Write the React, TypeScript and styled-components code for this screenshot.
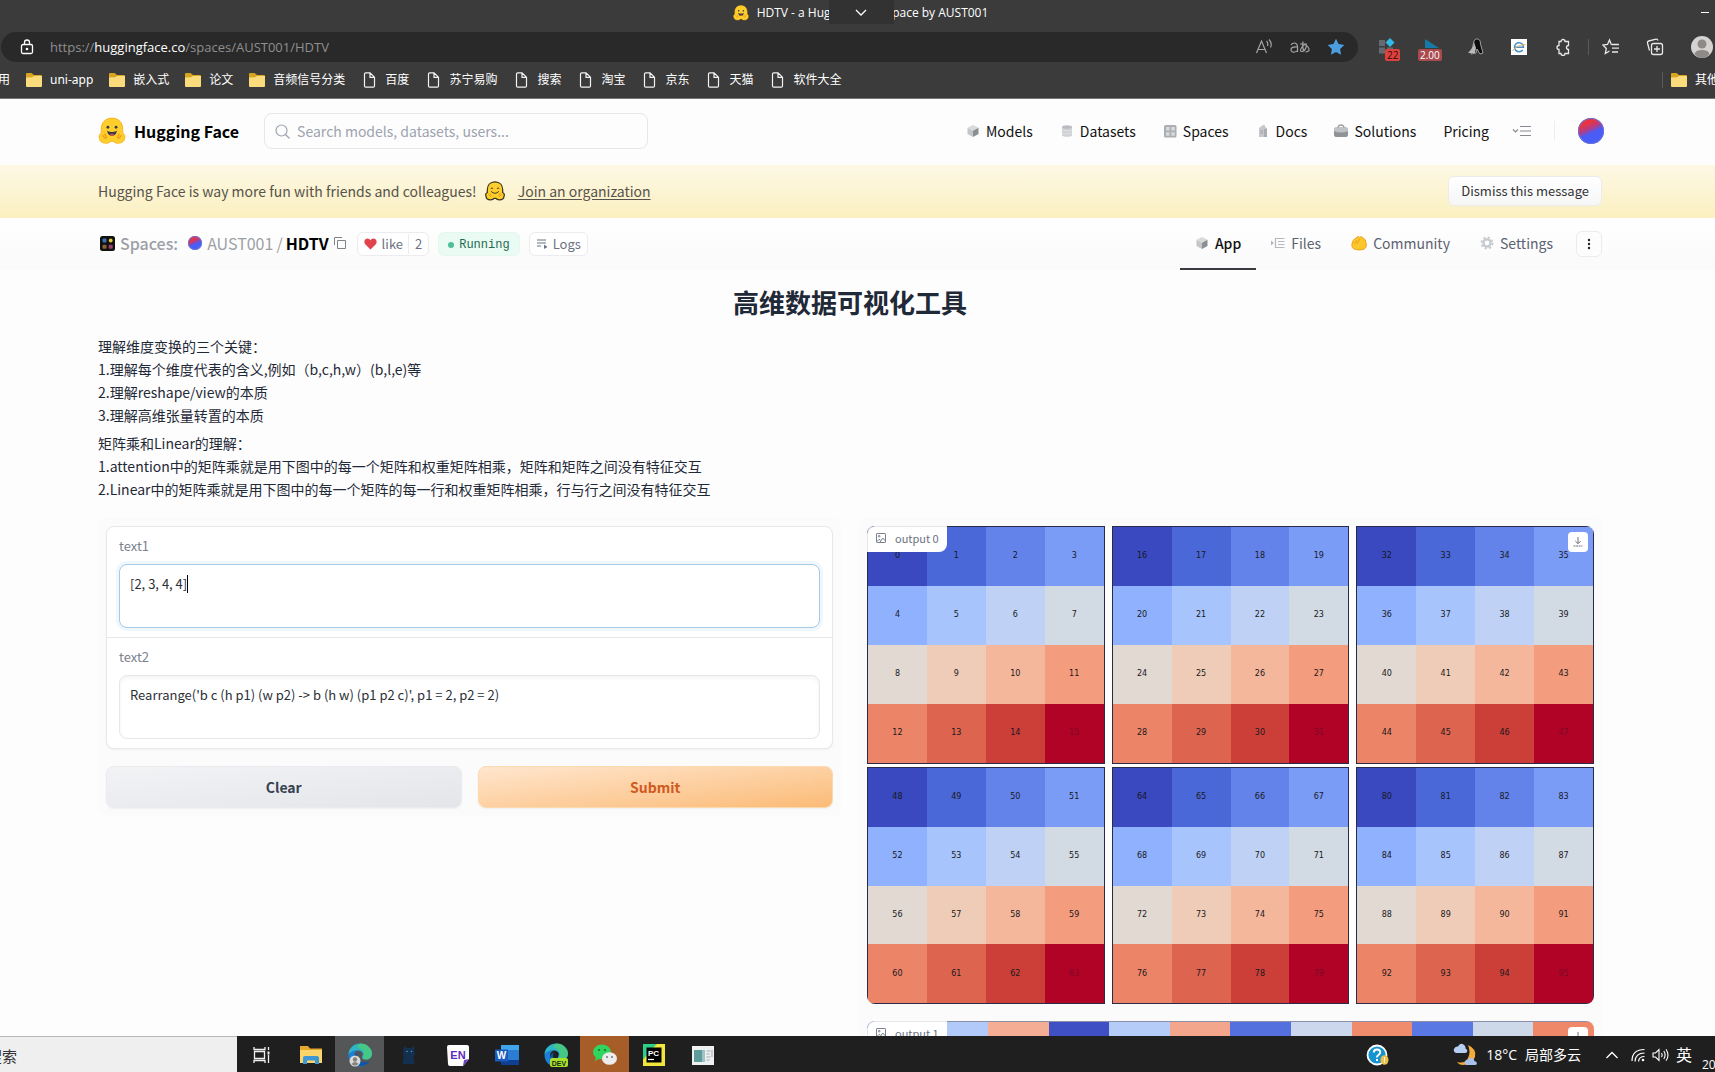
import React from "react";
import styled, { createGlobalStyle, css } from "styled-components";

const sans = `"Noto Sans CJK SC", "Noto Sans", sans-serif`;
const system = `"Open Sans", "Noto Sans CJK SC", sans-serif`;

const GlobalStyle = createGlobalStyle`
  *, *::before, *::after { box-sizing: border-box; }
  body { margin: 0; overflow: hidden; font-family: ${sans}; background: #fdfdfd; }
  button, input, textarea { font-family: inherit; }
  button { cursor: pointer; }
  a { color: inherit; text-decoration: none; }
  svg { display: block; flex: none; }
`;

const Screen = styled.div`
  display: flex;
  flex-direction: column;
  height: 100vh;
  overflow: hidden;
`;

/* ---------- browser ---------- */

const Browser = styled.header`
  flex: none;
  background: #3b3b3b;
  color: #fff;
  font-family: ${system};
  font-size: 12px;
  border-bottom: 1px solid #77757a;
  overflow: hidden;
`;

const TitleBar = styled.div`
  position: relative;
  display: flex;
  align-items: center;
  justify-content: center;
  height: 32px;
  padding: 0 0 6px 6px;
`;

const PageTitle = styled.div`
  display: flex;
  align-items: center;
  gap: 8px;
  line-height: 16px;
  white-space: nowrap;
`;

const DropHandle = styled.button`
  position: absolute;
  top: 0;
  left: calc(50% - 29px);
  width: 65px;
  height: 24px;
  display: grid;
  place-items: center;
  border: 0;
  padding: 0;
  background: #323232;
  color: #fff;
`;

const Minimise = styled.button`
  position: absolute;
  top: 4px;
  right: 0;
  width: 20px;
  height: 16px;
  border: 0;
  padding: 0 6px;
  background: none;
  &::before { content: ""; display: block; height: 1px; background: #fff; }
`;

const AddressRow = styled.div`
  display: flex;
  align-items: center;
  height: 30px;
  padding-left: 1px;
`;

const AddressBar = styled.div`
  flex: 1;
  display: flex;
  align-items: center;
  height: 30px;
  margin-right: 7px;
  padding: 0 12px 0 19px;
  border-radius: 15px;
  background: #292929;
  color: #8f8f8f;
`;

const Url = styled.p`
  flex: 1;
  margin: 0 0 0 16px;
  font-size: 13px;
  line-height: 20px;
  b { font-weight: 400; color: #fff; }
`;

const BarTools = styled.div`
  display: flex;
  gap: 16px;
`;

const ToolButton = styled.button`
  position: relative;
  flex: none;
  display: grid;
  place-items: center;
  width: ${(p: { $w?: number }) => p.$w ?? 44}px;
  height: 30px;
  padding: 0;
  border: 0;
  background: none;
  color: #e8e8e8;
`;

const ProfileButton = styled(ToolButton)`
  padding-left: 12px;
`;

const Badge = styled.span<{ $wide?: boolean }>`
  position: absolute;
  left: ${(p) => (p.$wide ? 9 : 20)}px;
  top: 17px;
  padding: 0 2px;
  border-radius: 2px;
  background: ${(p) => (p.$wide ? "#a94a4e" : "#e2403c")};
  color: ${(p) => (p.$wide ? "#fff" : "#2a1010")};
  font: 10px/12px ${system};
`;

const ToolDivider = styled.span`
  width: 1px;
  height: 16px;
  margin-left: 3px;
  background: #5a5a5a;
`;

const Bookmarks = styled.nav`
  display: flex;
  align-items: center;
  gap: 16px;
  height: 36px;
  margin-left: -14px;
  font-family: "Noto Sans", "Noto Sans CJK SC", sans-serif;
  font-size: 12px;
  line-height: 16px;
  white-space: nowrap;
`;

const Bookmark = styled.a`
  display: flex;
  align-items: center;
  gap: 8px;
`;

const OtherBookmarks = styled(Bookmark)`
  flex: none;
  width: 53px;
  height: 16px;
  margin-left: auto;
  padding-left: 8px;
  border-left: 1px solid #5a5a5a;
`;

/* ---------- site header ---------- */

const Page = styled.main`
  flex: 1;
  min-height: 0;
  overflow: hidden;
  background: #fdfdfd;
  color: #1f2937;
  font-size: 14px;
`;

const gutters = css`
  padding-left: 98px;
  padding-right: 113px;
`;

const SiteHeader = styled.div`
  ${gutters}
  display: flex;
  align-items: center;
  height: 66px;
  padding-right: 111px;
  padding-bottom: 2px;
`;

const Brand = styled.a`
  display: flex;
  align-items: center;
  gap: 8px;
  color: #000;
  font-size: 16px;
  line-height: 24px;
  font-weight: 700;
  white-space: nowrap;
`;

const SearchBox = styled.label`
  display: flex;
  align-items: center;
  gap: 7px;
  width: 384px;
  height: 36px;
  margin-left: 25px;
  padding: 0 10px;
  border: 1px solid #e5e7eb;
  border-radius: 8px;
  color: #9ca3af;
`;

const SearchInput = styled.input`
  flex: 1;
  min-width: 0;
  border: 0;
  outline: 0;
  padding: 0;
  background: none;
  font-size: 14px;
  line-height: 24px;
  &::placeholder { color: #9ca3af; opacity: 1; }
`;

const SiteNav = styled.nav`
  display: flex;
  align-items: center;
  gap: 23px;
  margin-left: auto;
  color: #111;
  line-height: 24px;
`;

const NavLinks = styled.div`
  display: flex;
  align-items: center;
  gap: 27px;
`;

const NavLink = styled.a`
  display: flex;
  align-items: center;
  gap: 6px;
`;

const IconButton = styled.button`
  padding: 0;
  border: 0;
  background: none;
`;

const NavDivider = styled.span`
  width: 1px;
  height: 20px;
  background: #eceef0;
`;

const Avatar = styled.span<{ $size: number }>`
  flex: none;
  display: block;
  width: ${(p) => p.$size}px;
  height: ${(p) => p.$size}px;
  border-radius: 50%;
  background: linear-gradient(155deg, #e8343f 25%, #b53c86 42%, #4a5cf5 56%, #4560fb);
  box-shadow: inset 0 0 0 1px #6a72d8;
`;

const Banner = styled.section`
  ${gutters}
  display: flex;
  align-items: center;
  height: 53px;
  padding-bottom: 2px;
  background: linear-gradient(#fdf8e5, #fbf0c0);
  color: #56534a;
  line-height: 24px;
  > svg { margin-left: 5px; }
`;

const BannerLink = styled.a`
  margin-left: 13px;
  text-decoration: underline;
  text-underline-offset: 2px;
`;

const Dismiss = styled.button`
  height: 30px;
  margin-left: auto;
  padding: 0 12px;
  border: 1px solid #ececec;
  border-radius: 6px;
  background: linear-gradient(#fff, #f6f6f7);
  color: #333;
  font-size: 13px;
  line-height: 20px;
`;

/* ---------- space header ---------- */

const SpaceHeader = styled.div`
  ${gutters}
  display: flex;
  align-items: center;
  height: 52px;
  background: linear-gradient(#fff, #fafafa);
`;

const Crumbs = styled.h1`
  display: flex;
  align-items: center;
  gap: 5px;
  margin: 0 11px 2px 0;
  padding-left: 2px;
  font-size: 16px;
  line-height: 24px;
  font-weight: 400;
  color: #9ca0a6;
  b { color: #000; }
`;

const CrumbKind = styled.span`
  font-weight: 500;
  margin-right: 5px;
`;

const Slash = styled.span`
  margin: 0 -2px;
`;

const Pills = styled.div`
  display: flex;
  gap: 9px;
`;

const Pill = styled.button<{ $live?: boolean }>`
  display: flex;
  align-items: center;
  gap: 5px;
  height: 24px;
  padding: 0 6px;
  border: 1px solid ${(p) => (p.$live ? "#e4f8ef" : "#ececee")};
  border-radius: 6px;
  background: ${(p) => (p.$live ? "#e9fbf3" : "#fff")};
  color: ${(p) => (p.$live ? "#1f6b52" : "#6b7280")};
  font-size: ${(p) => (p.$live ? 12 : 13)}px;
  line-height: 20px;
  ${(p) => p.$live && css`padding: 1px 9px 0; font-family: "Liberation Mono", monospace;`}
`;

const LikeCount = styled.span`
  padding-left: 6px;
  border-left: 1px solid #ececee;
`;

const Dot = styled.span`
  width: 6px;
  height: 6px;
  border-radius: 50%;
  background: #4fbf97;
`;

const Tabs = styled.nav`
  display: flex;
  align-self: stretch;
  margin-left: auto;
`;

const Tab = styled.a<{ $active?: boolean }>`
  display: flex;
  align-items: center;
  gap: 6px;
  padding: 0 15px;
  line-height: 24px;
  color: ${(p) => (p.$active ? "#111" : "#5b6270")};
  font-weight: ${(p) => (p.$active ? 500 : 400)};
  border-bottom: 2px solid ${(p) => (p.$active ? "#3a3b40" : "transparent")};
`;

const MoreButton = styled.button`
  align-self: center;
  display: grid;
  place-items: center;
  width: 26px;
  height: 26px;
  margin-left: 8px;
  padding: 0;
  border: 1px solid #ececee;
  border-radius: 6px;
  background: #fdfdfd;
`;

/* ---------- app ---------- */

const AppBody = styled.div`
  ${gutters}
  padding-top: 14px;
`;

const Heading = styled.h2`
  margin: 0 0 15px;
  text-align: center;
  font-size: 26px;
  line-height: 36px;
  font-weight: 700;
`;

const Note = styled.p`
  margin: 0 0 5px;
  font-size: 14px;
  line-height: 23px;
`;

const Columns = styled.div`
  display: grid;
  grid-template-columns: 1fr 1fr;
  gap: 18px;
  align-items: start;
  margin-top: 17px;
`;

const Panel = styled.div`
  display: flex;
  flex-direction: column;
  gap: 17px;
  padding: 8px;
  border-radius: 8px;
  background: #fbfbfb;
`;

const Card = styled.div`
  border: 1px solid #e8e9ec;
  border-radius: 8px;
  background: #fff;
  box-shadow: 0 1px 2px #0000000d;
`;

const Field = styled.div`
  position: relative;
  padding: 9px 12px;
  & + & { border-top: 1px solid #e5e7eb; }
`;

const FieldLabel = styled.label`
  display: block;
  margin-bottom: 8px;
  color: #7b818b;
  font-size: 13px;
  line-height: 20px;
`;

const TextArea = styled.textarea<{ $focused?: boolean }>`
  display: block;
  width: 100%;
  height: 64px;
  padding: 9px 10px;
  border: 1px solid ${(p) => (p.$focused ? "#a4cbe6" : "#e5e7eb")};
  border-radius: 8px;
  outline: 0;
  resize: none;
  background: #fff;
  box-shadow: ${(p) => (p.$focused ? "0 0 0 3px #eff7fc" : "inset 0 2px 4px #0000000d")};
  color: #2b2f36;
  font-size: 13px;
  line-height: 20px;
`;

const Caret = styled.span`
  position: absolute;
  left: 80px;
  top: 48px;
  width: 1px;
  height: 18px;
  background: #000;
`;

const Actions = styled.div`
  display: grid;
  grid-template-columns: 1fr 1fr;
  gap: 16px;
`;

const Action = styled.button<{ $primary?: boolean }>`
  height: 42px;
  border: 1px solid ${(p) => (p.$primary ? "#fdd9ae" : "#eaebee")};
  border-radius: 8px;
  background: ${(p) =>
    p.$primary
      ? "linear-gradient(to bottom right, #ffe6ce, #fbbb77)"
      : "linear-gradient(to bottom right, #f2f3f5, #e4e5e9)"};
  box-shadow: 0 1px 2px #0000000d;
  color: ${(p) => (p.$primary ? "#cf5a22" : "#374151")};
  font-size: 14px;
  line-height: 24px;
  font-weight: 600;
`;

const Output = styled.figure`
  position: relative;
  margin: 0;
  overflow: hidden;
  border-radius: 8px;
  background: #fff;
`;

const OutputLabel = styled.figcaption`
  position: absolute;
  top: 0;
  left: 0;
  display: flex;
  align-items: center;
  gap: 9px;
  padding: 1px 8px 4px;
  border: 1px solid #e5e7eb;
  border-width: 1px 0 0 1px;
  border-radius: 8px 0 8px 0;
  background: #fff;
  color: #6b7280;
  font-size: 11px;
  line-height: 20px;
`;

const Download = styled.button`
  position: absolute;
  top: 6px;
  right: 6px;
  display: grid;
  place-items: center;
  width: 20px;
  height: 20px;
  padding: 0;
  border: 0;
  border-radius: 4px;
  background: #fff;
`;

const Matrices = styled.div`
  display: grid;
  grid-template-columns: repeat(3, 1fr);
  gap: 3px 7px;
`;

const Matrix = styled.div`
  display: grid;
  grid-template-columns: repeat(4, 1fr);
  aspect-ratio: 1;
  border: 1px solid #2b2b48;
`;

const Cell = styled.span<{ $fill: string }>`
  display: grid;
  place-items: center;
  background: ${(p) => p.$fill};
  color: #181820;
  font: 8px/10px "DejaVu Sans", sans-serif;
`;

const FaintCell = styled(Cell)`
  color: #7c0a26;
`;

const Strip = styled.div`
  display: grid;
  grid-template-columns: repeat(12, 1fr);
  border-top: 1px solid #8a8ea8;
  span { height: 60px; }
`;

/* ---------- taskbar ---------- */

const Taskbar = styled.footer`
  flex: none;
  display: flex;
  align-items: center;
  height: 36px;
  overflow: hidden;
  background: #1f1f1f;
  color: #fff;
  font-family: ${system};
`;

const TaskSearch = styled.input`
  width: 237px;
  height: 36px;
  padding: 2px 0 0;
  border: 0;
  border-top: 1px solid #b9b9b9;
  border-radius: 0;
  outline: 0;
  background: #efefef;
  font-size: 15px;
  text-indent: -13px;
  &::placeholder { color: #333; opacity: 1; }
`;

const TaskButton = styled.button<{ $bg?: string }>`
  flex: none;
  display: grid;
  place-items: center;
  width: 49px;
  height: 36px;
  padding: 2px 0 0;
  border: 0;
  background: ${(p) => p.$bg ?? "transparent"};
`;

const Tray = styled.div`
  display: flex;
  align-items: center;
  align-self: stretch;
  margin-left: auto;
  padding-top: 2px;
  white-space: nowrap;
`;

const TrayItem = styled.button<{ $gap: number }>`
  display: flex;
  align-items: center;
  gap: 8px;
  margin-left: ${(p) => p.$gap}px;
  padding: 0;
  border: 0;
  background: none;
  color: #fff;
  font-size: 14px;
  line-height: 20px;
`;

const Ime = styled(TrayItem)`
  font-size: 16px;
`;

const Clock = styled.time`
  align-self: flex-end;
  width: 13px;
  margin-left: 10px;
  overflow: hidden;
  font-size: 12px;
  line-height: 14px;
`;

/* ---------- icons ---------- */

const Hugging = ({ size = 26, outlined = false }: { size?: number; outlined?: boolean }) => (
  <svg width={size} height={size} viewBox="0 0 26 26">
    <path
      d="M13 1C6.6 1 3 5.600 3 11.500v3.500c-1.800 1-2.600 3-1.600 5 0 2.600 2.500 4.200 5.600 4.400 2.300.1 4-.6 4.800-1.800h2.400c.8 1.200 2.500 1.900 4.800 1.800 3.100-.2 5.600-1.800 5.600-4.400 1-2 .2-4-1.600-5v-3.500C23 5.600 19.400 1 13 1z"
      fill="#fdce2c"
      stroke={outlined ? "#3d3320" : "#f6ad1b"}
      strokeWidth={outlined ? 1.600 : 0.800}
    />
    <path d="M4 17l3.500 3.500M6 15.500l2.500 4M22 17l-3.500 3.500M20 15.500l-2.500 4" stroke="#ee9d18" strokeWidth="1.200" fill="none" />
    {outlined ? (
      <path d="M7.500 10q1.500-2 3 0M15.500 10q1.500-2 3 0M8 13.500q5 5 10 0" stroke="#453a22" strokeWidth="1.300" fill="none" />
    ) : (
      <>
        <circle cx="9.200" cy="9.500" r="1.300" fill="#3a3b45" />
        <circle cx="16.800" cy="9.500" r="1.300" fill="#3a3b45" />
        <path d="M8.500 12.800c2.800 1.500 6.200 1.500 9 0-.3 3-2 4.800-4.500 4.800s-4.200-1.800-4.500-4.800z" fill="#3a3b45" />
        <path d="M10.800 16.500q2.200-1.800 4.400 0-2.200 1.600-4.400 0z" fill="#ef4e4e" />
      </>
    )}
  </svg>
);

const Folder = () => (
  <svg width="16" height="16" viewBox="0 0 16 16">
    <path d="M0 2Q0 1 1 1h4.500L8 3h7q1 0 1 1v2H0z" fill="#d8a520" />
    <path d="M0 5.500l6-.2L8 4h8v10q0 1-1 1H1q-1 0-1-1z" fill="#fbdc7c" />
  </svg>
);

const PageIcon = () => (
  <svg width="16" height="16" viewBox="0 0 16 16" fill="none" stroke="#f2f2f2" strokeWidth="1.200">
    <path d="M3.500 2q0-1.200 1.200-1.200H9l4.500 4.500V14q0 1.200-1.200 1.200H4.700q-1.200 0-1.200-1.200zM9 .8v4.500h4.500" />
  </svg>
);

const Lock = () => (
  <svg width="14" height="16" viewBox="0 0 14 16" fill="none" stroke="#fff" strokeWidth="1.300">
    <rect x="1.500" y="5.500" width="11" height="9" rx="1.500" />
    <path d="M4.500 5.500V3.500a2.500 2.500 0 015 0v2" />
    <circle cx="7" cy="10" r=".7" fill="#fff" />
  </svg>
);

const Cube = () => (
  <svg width="14" height="14" viewBox="0 0 14 14">
    <path d="M7 1l5.500 2.800L7 6.800 1.500 3.800z" fill="#d9dadb" />
    <path d="M1.500 3.800L7 6.800V13l-5.500-3z" fill="#c3c5c7" />
    <path d="M12.500 3.800L7 6.800V13l5.500-3z" fill="#8b8e92" />
  </svg>
);

const Database = () => (
  <svg width="14" height="14" viewBox="0 0 14 14">
    <path d="M2 3v8q0 1.800 5 1.800t5-1.800V3z" fill="#cfd1d4" />
    <ellipse cx="7" cy="3" rx="5" ry="1.800" fill="#b9bcc0" />
    <path d="M2 6q5 2.400 10 0M2 9q5 2.400 10 0" stroke="#e4e5e7" fill="none" strokeWidth=".7" />
  </svg>
);

const Blocks = () => (
  <svg width="14" height="14" viewBox="0 0 14 14">
    <rect x="1" y="1" width="12.500" height="12.500" rx="1.500" fill="#abaeb2" />
    <path d="M3 3h3.500v3.500H3zM8.300 3h3.500v3.500H8.300zM3 8.300h3.500v3.500H3zM8.300 8.300h3.500v3.500H8.300z" fill="#d8dadc" />
  </svg>
);

const DocsIcon = () => (
  <svg width="14" height="14" viewBox="0 0 14 14">
    <path d="M3 4l4-3h2v2l2 1v9H3z" fill="#c6c8cb" />
    <path d="M8 5h3v8H8z" fill="#a9acb0" />
    <path d="M4.500 7H7M4.500 9H7" stroke="#8f9296" strokeWidth=".8" />
  </svg>
);

const Briefcase = () => (
  <svg width="14" height="14" viewBox="0 0 14 14">
    <path d="M4 4q0-3 3-3t3 3" fill="none" stroke="#9b9ea2" strokeWidth="1.300" />
    <rect x="0" y="3.500" width="14" height="9.500" rx="2" fill="#8f9397" />
    <path d="M0 7q7 3 14 0V5q0-1.500-1.500-1.500h-11Q0 3.500 0 5z" fill="#c0c3c6" />
  </svg>
);

const MenuList = () => (
  <svg width="19" height="14" viewBox="0 0 19 14" fill="none" stroke="#858a92" strokeWidth="1.200">
    <path d="M8 2.500h11M8 7h11M8 11.500h11M1 5.500L3.500 8 6 5.500" />
  </svg>
);

const SpacesLogo = () => (
  <svg width="15" height="15" viewBox="0 0 15 15">
    <rect width="15" height="15" rx="2.500" fill="#111" />
    <rect x="2.500" y="2.500" width="4" height="4" rx="1" fill="#3f6fae" />
    <circle cx="10.700" cy="4.500" r="1.900" fill="#e8c93c" />
    <rect x="2.500" y="8.700" width="4" height="4" rx="1" fill="#8b6238" />
    <rect x="8.700" y="8.700" width="4" height="4" rx="1" fill="#a33e6c" />
  </svg>
);

const FilesIcon = () => (
  <svg width="14" height="14" viewBox="0 0 14 14" fill="none" stroke="#b4b8bd" strokeWidth="1.200">
    <path d="M5 2.500h8.500M7 5.500h6.500M7 8.500h6.500M5 11.500h8.500M4.500 2v10" />
    <path d="M0 4.500L3 7 0 9.500z" fill="#b4b8bd" stroke="none" />
  </svg>
);

const Hands = () => (
  <svg width="16" height="16" viewBox="0 0 16 16">
    <path d="M5 3q2-2.500 3.500-.8Q11 .8 12 3q3 1 3 5 1.500 5-3 6.500-5 1-7 0Q0 13.500 1 9q0-4 4-6z" fill="#fcc62d" stroke="#eea51c" />
    <path d="M6 5L3.500 9M9 4L5.500 9" stroke="#ee9f18" fill="none" />
  </svg>
);

const Gear = () => (
  <svg width="14" height="14" viewBox="0 0 14 14" fill="none" stroke="#c6c9cd">
    <circle cx="7" cy="7" r="3.600" strokeWidth="2.400" />
    <circle cx="7" cy="7" r="5.600" strokeWidth="1.700" strokeDasharray="2.200 2.200" />
  </svg>
);

const DownloadIcon = () => (
  <svg width="10" height="10" viewBox="0 0 10 10" fill="none" stroke="#5f656e" strokeWidth=".9">
    <path d="M5 0v6.500M2.300 4L5 6.700 7.700 4" />
    <path d="M.5 9h9" strokeDasharray="2 .6" />
  </svg>
);

const ImageIcon = () => (
  <svg width="10" height="10" viewBox="0 0 10 10" fill="none" stroke="#6b7280" strokeWidth=".9">
    <rect x=".5" y=".5" width="9" height="9" rx=".6" />
    <circle cx="3.200" cy="3.200" r=".8" />
    <path d="M1 8.500l2-2.200 1.500 1M4 9l2.800-4L9.500 8" />
  </svg>
);

const EdgeLogo = ({ children }: { children?: React.ReactNode }) => (
  <svg width="26" height="26" viewBox="0 0 26 26">
    <path d="M1.500 13C1.500 6 7 1.500 13.500 1.500S25 6.500 25 11.500c0 4-3 6-6 6s-5-1.600-3.600-3.300C17 11 14.500 8.500 11 8.500c-4.500 0-8 2-9.500 4.500z" fill="#2fb5c9" />
    <path d="M13.500 1.500C20 1.500 25 6.500 25 11.500c0 4-3 6-6 6-2.500 0-3-1-3-2 3-5-1-9.500-5.500-9.500 0-2 1-4.500 3-4.500z" fill="#4fce6a" opacity=".7" />
    <path d="M1.500 13C3 9.500 7 8 11 8.500c-3 1-4.500 3.500-4 7 .6 5 6 8.500 11.500 7-2 1.500-4 2-6 2-6 0-11-5-11-11.500z" fill="#1b80d8" />
    <path d="M11 10.500c-2 3-1 7.500 3 9 3 1.200 6.500.7 8.500-.5-1 2.500-5 5-9 5-4.500-.5-7-4.500-6.500-8.500.3-2.500 2-4.500 4-5z" fill="#0f56a8" />
    {children}
  </svg>
);

/* ---------- data ---------- */

const coolwarm = [
  "#3a49bf", "#4b68d8", "#6383ea", "#7a9cf7",
  "#90b1fe", "#a8c4fd", "#bfd2f6", "#d2dae3",
  "#e2d9d3", "#efccb7", "#f5b79c", "#f39d7e",
  "#ec8467", "#dd644e", "#cb3f38", "#b00326",
];

const stripColors = [
  "#5470de", "#b2caf9", "#f5ae93", "#3f50c4", "#b6ccf8", "#f3a68b",
  "#5470de", "#ccd6ec", "#f08b6c", "#5a78e4", "#cdd9e9", "#ee8869",
];

const bookmarks: [string, boolean][] = [
  ["uni-app", true], ["嵌入式", true], ["论文", true], ["音频信号分类", true],
  ["百度", false], ["苏宁易购", false], ["搜索", false], ["淘宝", false],
  ["京东", false], ["天猫", false], ["软件大全", false],
];

const OutputFrame = ({ name, children }: { name: string; children: React.ReactNode }) => (
  <Output>
    {children}
    <OutputLabel><ImageIcon />{name}</OutputLabel>
    <Download aria-label="Download"><DownloadIcon /></Download>
  </Output>
);

export default function App() {
  return (
    <Screen>
      <GlobalStyle />
      <Browser>
        <TitleBar>
          <PageTitle><Hugging size={16} />HDTV - a Hugging Face Space by AUST001</PageTitle>
          <DropHandle aria-label="Expand">
            <svg width="12" height="7" viewBox="0 0 12 7" fill="none" stroke="#fff" strokeWidth="1.300"><path d="M1 1l5 5 5-5" /></svg>
          </DropHandle>
          <Minimise aria-label="Minimise" />
        </TitleBar>
        <AddressRow>
          <AddressBar>
            <Lock />
            <Url>https://<b>huggingface.co</b>/spaces/AUST001/HDTV</Url>
            <BarTools>
              <ToolButton $w={20} aria-label="Read aloud">
                <svg width="18" height="16" viewBox="0 0 18 16" fill="none" stroke="#a5a5a5" strokeWidth="1.200">
                  <path d="M1.500 14L6.500 2l5 12M3 10.500h7M11.500 2q2 2 1 5M14 .5q3.500 3.500 1.500 8" />
                </svg>
              </ToolButton>
              <ToolButton $w={20} aria-label="Translate">
                <svg width="20" height="14" viewBox="0 0 20 14" fill="none" stroke="#a5a5a5" strokeWidth="1.200">
                  <path d="M1 5q1-2 3.500-2T7.500 6v6M7.500 7Q1 6.500 1 9.500T4.500 12 7.500 9.500M10 4h7M13 1.500q-1 6 1 10M16.500 6q-1.500 5.500-4.500 5.500T12 7t6 0 -2.500 5" />
                </svg>
              </ToolButton>
              <ToolButton $w={20} aria-label="Favourite">
                <svg width="18" height="18" viewBox="0 0 18 18"><path d="M9 .8l2.500 5.300 5.800.8-4.200 4 1 5.900L9 14l-5.100 2.800 1-5.900-4.200-4 5.800-.8z" fill="#4b9fe0" /></svg>
              </ToolButton>
            </BarTools>
          </AddressBar>
          <ToolButton aria-label="Extension">
            <svg width="18" height="18" viewBox="0 0 18 18">
              <path d="M1 2h6v6H1zM1 9.500h6v6H1zM9 9.500h6v6H9z" fill="#666a6e" />
              <path d="M12 0l4.500 4.500L12 9 7.500 4.500z" fill="#32b9e8" />
            </svg>
            <Badge>22</Badge>
          </ToolButton>
          <ToolButton aria-label="Video speed">
            <svg width="18" height="18" viewBox="0 0 18 18"><path d="M3 1l14 9H3z" fill="#1679a8" /></svg>
            <Badge $wide>2.00</Badge>
          </ToolButton>
          <ToolButton aria-label="Extension">
            <svg width="18" height="18" viewBox="0 0 18 18">
              <path d="M8 3q1-3 4-2 3 1 2.500 5l2.500 9-3 1-3-5-1 4-5 1z" fill="#0c0c0c" stroke="#d4d4d4" strokeWidth=".7" />
              <path d="M8 4L7 9l-5 6h7l1-5z" fill="#b9b9b9" />
            </svg>
          </ToolButton>
          <ToolButton aria-label="Extension">
            <svg width="16" height="16" viewBox="0 0 16 16">
              <rect width="16" height="16" fill="#fff" />
              <path d="M4 8.300h8.500A4.500 4.500 0 108 12.700q2.500 0 3.800-1.700" fill="none" stroke="#4b8fc6" strokeWidth="1.500" />
              <path d="M1.500 12Q5 6 14.500 5.500" stroke="#e0b95a" fill="none" />
            </svg>
          </ToolButton>
          <ToolButton aria-label="Extensions">
            <svg width="18" height="18" viewBox="0 0 18 18" fill="none" stroke="currentColor" strokeWidth="1.300">
              <path d="M5 3.500h2a2 2 0 014 0h3.500v4a2 2 0 000 4v4H11a2 2 0 01-4 0H5v-4a2 2 0 010-4z" />
            </svg>
          </ToolButton>
          <ToolDivider />
          <ToolButton aria-label="Favourites">
            <svg width="18" height="18" viewBox="0 0 18 18" fill="none" stroke="currentColor" strokeWidth="1.300">
              <path d="M9.500 7L7.500 2 5.500 6.500.8 7l3.500 3.500-1 5L7.500 13M10 6.500h7M10 10.200h7M10 14h6" />
            </svg>
          </ToolButton>
          <ToolButton aria-label="Collections">
            <svg width="18" height="18" viewBox="0 0 18 18" fill="none" stroke="currentColor" strokeWidth="1.300">
              <rect x="5.500" y="5.500" width="11" height="11" rx="2" />
              <path d="M11 8v6M8 11h6M3.500 12.500L1.500 5q-.4-1.600 1.200-2L10 1.200q1.500-.3 2 1.300" />
            </svg>
          </ToolButton>
          <ProfileButton $w={38} aria-label="Profile">
            <svg width="24" height="24" viewBox="0 0 24 24">
              <circle cx="12" cy="12" r="11" fill="#d4d3d1" />
              <circle cx="12" cy="9" r="4.500" fill="#8d8a87" />
              <path d="M4.500 19q1-4 7.500-4t7.500 4q-3 4-7.500 4t-7.500-4z" fill="#8d8a87" />
            </svg>
          </ProfileButton>
        </AddressRow>
        <Bookmarks aria-label="Bookmarks">
          <Bookmark href="#">应用</Bookmark>
          {bookmarks.map(([name, folder]) => (
            <Bookmark href="#" key={name}>{folder ? <Folder /> : <PageIcon />}{name}</Bookmark>
          ))}
          <OtherBookmarks href="#"><Folder />其他</OtherBookmarks>
        </Bookmarks>
      </Browser>

      <Page>
        <SiteHeader>
          <Brand href="#"><Hugging size={28} />Hugging Face</Brand>
          <SearchBox>
            <svg width="15" height="15" viewBox="0 0 15 15" fill="none" stroke="#9ca3af" strokeWidth="1.200"><circle cx="6.500" cy="6.500" r="5.500" /><path d="M10.500 10.500L14.500 14.500" /></svg>
            <SearchInput aria-label="Search" placeholder="Search models, datasets, users..." />
          </SearchBox>
          <SiteNav>
            <NavLinks>
              <NavLink href="#"><Cube />Models</NavLink>
              <NavLink href="#"><Database />Datasets</NavLink>
              <NavLink href="#"><Blocks />Spaces</NavLink>
              <NavLink href="#"><DocsIcon />Docs</NavLink>
              <NavLink href="#"><Briefcase />Solutions</NavLink>
              <NavLink href="#">Pricing</NavLink>
            </NavLinks>
            <IconButton aria-label="More"><MenuList /></IconButton>
            <NavDivider />
            <IconButton aria-label="Account"><Avatar $size={26} /></IconButton>
          </SiteNav>
        </SiteHeader>

        <Banner>
          Hugging Face is way more fun with friends and colleagues!&nbsp;<Hugging size={20} outlined />
          <BannerLink href="#">Join an organization</BannerLink>
          <Dismiss>Dismiss this message</Dismiss>
        </Banner>

        <SpaceHeader>
          <Crumbs>
            <SpacesLogo />
            <CrumbKind>Spaces:</CrumbKind>
            <Avatar $size={14} />
            <a href="#">AUST001</a><Slash>/</Slash><b>HDTV</b>
            <svg width="12" height="12" viewBox="0 0 12 12" fill="none" stroke="#7d8289"><path d="M3.500 3.500h8v8h-8zM.5 8V.5H8" /></svg>
          </Crumbs>
          <Pills>
            <Pill>
              <svg width="13" height="12" viewBox="0 0 13 12"><path d="M6.500 11.500L1.200 6.200C-.8 3.500 1 .5 3.400.5 5 .5 6 1.500 6.500 2.300 7 1.500 8 .5 9.600.5 12 .5 13.800 3.500 11.800 6.200z" fill="#e0434e" /></svg>
              like<LikeCount>2</LikeCount>
            </Pill>
            <Pill $live><Dot />Running</Pill>
            <Pill>
              <svg width="12" height="12" viewBox="0 0 12 12" fill="none" stroke="#6b7280" strokeWidth="1.100"><path d="M1 2h9M1 5h9M1 8h4" /><path d="M8 6.500v4.500L11.500 9z" fill="#6b7280" stroke="none" /></svg>
              Logs
            </Pill>
          </Pills>
          <Tabs>
            <Tab href="#" $active><Cube />App</Tab>
            <Tab href="#"><FilesIcon />Files</Tab>
            <Tab href="#"><Hands />Community</Tab>
            <Tab href="#"><Gear />Settings</Tab>
            <MoreButton aria-label="More options">
              <svg width="4" height="12" viewBox="0 0 4 12" fill="#222"><circle cx="2" cy="2" r="1.200" /><circle cx="2" cy="6" r="1.200" /><circle cx="2" cy="10" r="1.200" /></svg>
            </MoreButton>
          </Tabs>
        </SpaceHeader>

        <AppBody>
          <Heading>高维数据可视化工具</Heading>
          <Note>
            理解维度变换的三个关键：<br />
            1.理解每个维度代表的含义,例如（b,c,h,w）(b,l,e)等<br />
            2.理解reshape/view的本质<br />
            3.理解高维张量转置的本质
          </Note>
          <Note>
            矩阵乘和Linear的理解：<br />
            1.attention中的矩阵乘就是用下图中的每一个矩阵和权重矩阵相乘，矩阵和矩阵之间没有特征交互<br />
            2.Linear中的矩阵乘就是用下图中的每一个矩阵的每一行和权重矩阵相乘，行与行之间没有特征交互
          </Note>
          <Columns>
            <Panel>
              <Card>
                <Field>
                  <FieldLabel htmlFor="text1">text1</FieldLabel>
                  <TextArea id="text1" $focused defaultValue="[2, 3, 4, 4]" />
                  <Caret />
                </Field>
                <Field>
                  <FieldLabel htmlFor="text2">text2</FieldLabel>
                  <TextArea id="text2" defaultValue="Rearrange('b c (h p1) (w p2) -> b (h w) (p1 p2 c)', p1 = 2, p2 = 2)" />
                </Field>
              </Card>
              <Actions>
                <Action>Clear</Action>
                <Action $primary>Submit</Action>
              </Actions>
            </Panel>
            <Panel>
              <OutputFrame name="output 0">
                <Matrices>
                  {[0, 1, 2, 3, 4, 5].map((m) => (
                    <Matrix key={m}>
                      {coolwarm.map((fill, i) =>
                        i === 15 ? (
                          <FaintCell key={i} $fill={fill}>{m * 16 + i}</FaintCell>
                        ) : (
                          <Cell key={i} $fill={fill}>{m * 16 + i}</Cell>
                        ),
                      )}
                    </Matrix>
                  ))}
                </Matrices>
              </OutputFrame>
              <OutputFrame name="output 1">
                <Strip>
                  {stripColors.map((fill, i) => <Cell key={i} $fill={fill} />)}
                </Strip>
              </OutputFrame>
            </Panel>
          </Columns>
        </AppBody>
      </Page>

      <Taskbar>
        <TaskSearch aria-label="搜索" placeholder="搜索" />
        <TaskButton aria-label="Task view">
          <svg width="18" height="18" viewBox="0 0 18 18" fill="none" stroke="#f0f0f0" strokeWidth="1.300">
            <path d="M1.500 5.500h10v7h-10zM1 1v2.500h11V1M1 17v-2.500h11V17M15.500 1v3M15.500 9v8" /><path d="M14.500 5.500h2v3h-2z" fill="#f0f0f0" stroke="none" />
          </svg>
        </TaskButton>
        <TaskButton aria-label="Explorer">
          <svg width="22" height="20" viewBox="0 0 22 20">
            <path d="M0 1h8l2 2.500h12V18H0z" fill="#e5a92e" /><path d="M0 5h22v13H0z" fill="#fbd36b" />
            <path d="M3 19v-6q0-2 2-2h12q2 0 2 2v6h-4v-3.500H7V19z" fill="#3d97d3" />
          </svg>
        </TaskButton>
        <TaskButton $bg="#555657" aria-label="Edge">
          <EdgeLogo><circle cx="8" cy="19" r="5.500" fill="#d9d9d9" /><circle cx="8" cy="17.500" r="2.200" fill="#85817e" /><path d="M4.500 22q3.500-4 7 0-3.500 3-7 0z" fill="#85817e" /></EdgeLogo>
        </TaskButton>
        <TaskButton aria-label="Cat">
          <svg width="18" height="20" viewBox="0 0 18 20"><path d="M4 1l3 2h4l3-2 1 8-1.500 3 1 7H2.500l1-7L3 9z" fill="#14304f" /><circle cx="7" cy="6.500" r=".8" fill="#5a90c8" /><circle cx="11.500" cy="6.500" r=".8" fill="#5a90c8" /></svg>
        </TaskButton>
        <TaskButton aria-label="EN">
          <svg width="22" height="22" viewBox="0 0 22 22"><path d="M2 1h18q2 0 2 2v12l-6 7H3q-2 0-2-2L0 3q0-2 2-2z" fill="#fff" /><path d="M22 15l-6 7 1-6z" fill="#6b3fc9" /><text x="11" y="15" textAnchor="middle" fontFamily="Liberation Sans" fontWeight="700" fontSize="11" fill="#5b2bbb">EN</text></svg>
        </TaskButton>
        <TaskButton aria-label="Word">
          <svg width="24" height="22" viewBox="0 0 24 22"><path d="M6 1h18v20H6z" fill="#2b7cd3" /><path d="M6 1h18v5H6z" fill="#41a5ee" /><path d="M6 16h18v5H6z" fill="#103f91" /><path d="M0 5.500h13v12H0z" fill="#185abd" /><text x="6.500" y="15" textAnchor="middle" fontFamily="Liberation Sans" fontWeight="700" fontSize="10" fill="#fff">W</text></svg>
        </TaskButton>
        <TaskButton aria-label="Edge Dev">
          <EdgeLogo><rect x="7" y="16" width="18" height="9" rx="2" fill="#a4e02c" /><text x="16" y="23.500" textAnchor="middle" fontFamily="Liberation Sans" fontWeight="700" fontSize="7" fill="#1a2a10">DEV</text></EdgeLogo>
        </TaskButton>
        <TaskButton $bg="#a65d27" aria-label="WeChat">
          <svg width="24" height="22" viewBox="0 0 24 22"><ellipse cx="9" cy="8" rx="9" ry="7.500" fill="#2fd55c" /><path d="M3 13l-1 4 4-2z" fill="#2fd55c" /><ellipse cx="16.500" cy="14.500" rx="7.500" ry="6.300" fill="#ececec" /><g fill="#1c6f35"><circle cx="6" cy="6" r="1.100" /><circle cx="12" cy="6" r="1.100" /></g><g fill="#777"><circle cx="14" cy="13" r="1" /><circle cx="19" cy="13" r="1" /></g></svg>
        </TaskButton>
        <TaskButton aria-label="PyCharm">
          <svg width="22" height="22" viewBox="0 0 22 22"><path d="M0 0h22v22H0z" fill="#f2e63c" /><path d="M0 0h14L6 8 0 16z" fill="#2fcf8a" /><path d="M3.500 3.500h15v15h-15z" fill="#000" /><text x="5" y="12" fontFamily="Liberation Sans" fontWeight="700" fontSize="8" fill="#fff">PC</text><path d="M5 15.500h6" stroke="#fff" strokeWidth="1.200" /></svg>
        </TaskButton>
        <TaskButton aria-label="Window">
          <svg width="22" height="19" viewBox="0 0 22 19"><path d="M0 0h22v19H0z" fill="#eef1f1" /><path d="M2 4h8v12H2z" fill="#5f9c9c" /><path d="M10 4h3v12h-3z" fill="#9fc3c3" /><path d="M14.500 5h4M14.500 8h3M14.500 11h4M14.500 14h3M20 4v7" stroke="#a9a9a9" /></svg>
        </TaskButton>
        <Tray>
          <TrayItem $gap={0} aria-label="Help">
            <svg width="24" height="22" viewBox="0 0 24 22"><circle cx="11" cy="11" r="9.500" fill="#1593cf" stroke="#fff" strokeWidth="1.800" /><path d="M7.800 8.500q0-3 3.200-3t3.200 2.800q0 1.700-1.700 2.700T11 13.500M11 15v2" stroke="#fff" strokeWidth="2" fill="none" /><ellipse cx="18.500" cy="16" rx="4" ry="4.800" fill="#ecc04b" /><path d="M18.500 13v3.500M18.500 17.500v1.200" stroke="#fff" /></svg>
          </TrayItem>
          <TrayItem $gap={63}>
            <svg width="25" height="24" viewBox="0 0 25 24"><path d="M15 2q9 4 7 12-3 8-12 8-4 0-6-3 8 2 11-4t0-13z" fill="#f3a93b" /><path d="M3 10q-3-1-2-4t4-2.500Q7-.5 10.500 1.500 13 3 12.500 5.500q2.500 1 1.500 3.500-.5 1-2 1z" fill="#b7cdf2" /><path d="M13.500 22q-2.500-1-1.500-3.500T15 17q2-3.500 5-1.500 1.500 1 1.300 2.500 3 .5 2.500 3-.3 1-1.800 1z" fill="#a8c1ec" /></svg>
            <span>18°C</span><span>局部多云</span>
          </TrayItem>
          <TrayItem $gap={25} aria-label="Show hidden icons">
            <svg width="12" height="8" viewBox="0 0 12 8" fill="none" stroke="#fff" strokeWidth="1.300"><path d="M.5 7L6 1.500 11.500 7" /></svg>
          </TrayItem>
          <TrayItem $gap={13} aria-label="Network">
            <svg width="14" height="14" viewBox="0 0 14 14" fill="none" stroke="#fff" strokeWidth="1.200"><path d="M1 13Q1 1.500 13.500 1.500M4 13.500Q4.500 5 13.500 5M7.500 13.500Q8 8.500 13.500 8.500" /><circle cx="12" cy="12" r="1.300" fill="#fff" stroke="none" /></svg>
          </TrayItem>
          <TrayItem $gap={7} aria-label="Volume">
            <svg width="17" height="14" viewBox="0 0 17 14" fill="none" stroke="#fff" strokeWidth="1.100"><path d="M1 5h2.500L7 1.500v11L3.500 9H1zM9.500 5q1.300 2 0 4M11.800 3q2.600 4 0 8M14 1.200q4 5.800 0 11.600" /></svg>
          </TrayItem>
          <Ime $gap={7}>英</Ime>
          <Clock>20</Clock>
        </Tray>
      </Taskbar>
    </Screen>
  );
}
